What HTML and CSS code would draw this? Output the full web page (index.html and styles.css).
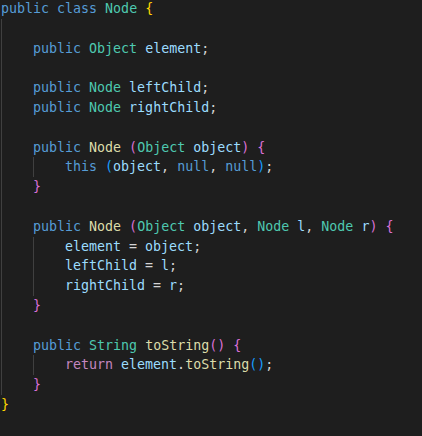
FILE: index.html
```html
<!DOCTYPE html>
<html>
<head>
<meta charset="utf-8">
<link rel="stylesheet" href="styles.css">
</head>
<body>
<div class="editor">
<div class="ln"><span class="k">public</span> <span class="k">class</span> <span class="t">Node</span> <span class="b1">{</span></div>
<div class="ln"><span class="ind"></span></div>
<div class="ln"><span class="ind"></span><span class="k">public</span> <span class="t">Object</span> <span class="v">element</span>;</div>
<div class="ln"><span class="ind"></span></div>
<div class="ln"><span class="ind"></span><span class="k">public</span> <span class="t">Node</span> <span class="v">leftChild</span>;</div>
<div class="ln"><span class="ind"></span><span class="k">public</span> <span class="t">Node</span> <span class="v">rightChild</span>;</div>
<div class="ln"><span class="ind"></span></div>
<div class="ln"><span class="ind"></span><span class="k">public</span> <span class="f">Node</span> <span class="b2">(</span><span class="t">Object</span> <span class="v">object</span><span class="b2">)</span> <span class="b2">{</span></div>
<div class="ln"><span class="ind"></span><span class="ind"></span><span class="k">this</span> <span class="b3">(</span><span class="v">object</span>, <span class="k">null</span>, <span class="k">null</span><span class="b3">)</span>;</div>
<div class="ln"><span class="ind"></span><span class="b2">}</span></div>
<div class="ln"><span class="ind"></span></div>
<div class="ln"><span class="ind"></span><span class="k">public</span> <span class="f">Node</span> <span class="b2">(</span><span class="t">Object</span> <span class="v">object</span>, <span class="t">Node</span> <span class="v">l</span>, <span class="t">Node</span> <span class="v">r</span><span class="b2">)</span> <span class="b2">{</span></div>
<div class="ln"><span class="ind"></span><span class="ind"></span><span class="v">element</span> = <span class="v">object</span>;</div>
<div class="ln"><span class="ind"></span><span class="ind"></span><span class="v">leftChild</span> = <span class="v">l</span>;</div>
<div class="ln"><span class="ind"></span><span class="ind"></span><span class="v">rightChild</span> = <span class="v">r</span>;</div>
<div class="ln"><span class="ind"></span><span class="b2">}</span></div>
<div class="ln"><span class="ind"></span></div>
<div class="ln"><span class="ind"></span><span class="k">public</span> <span class="t">String</span> <span class="f">toString</span><span class="b2">()</span> <span class="b2">{</span></div>
<div class="ln"><span class="ind"></span><span class="ind"></span><span class="c">return</span> <span class="v">element</span>.<span class="f">toString</span><span class="b3">()</span>;</div>
<div class="ln"><span class="ind"></span><span class="b2">}</span></div>
<div class="ln"><span class="b1">}</span></div>
</div>
</body>
</html>
```
FILE: styles.css
```css
html, body {
  margin: 0;
  padding: 0;
  background: #1e1e1e;
}
body {
  width: 422px;
  height: 436px;
  overflow: hidden;
}
.editor {
  padding: 0 0 0 1px;
  margin-top: -1px;
  font-family: "DejaVu Sans Mono", "Liberation Mono", monospace;
  font-size: 13.3px;
  color: #d4d4d4;
}
.ln {
  height: 19.8px;
  line-height: 19.8px;
  white-space: pre;
}
.ind {
  display: inline-block;
  vertical-align: top;
  width: 32px;
  height: 19.8px;
  box-shadow: inset 1px 0 0 #404040;
}
.k { color: #569cd6; }
.t { color: #4ec9b0; }
.v { color: #9cdcfe; }
.f { color: #dcdcaa; }
.c { color: #c586c0; }
.b1 { color: #ffd700; }
.b2 { color: #da70d6; }
.b3 { color: #179fff; }
```
